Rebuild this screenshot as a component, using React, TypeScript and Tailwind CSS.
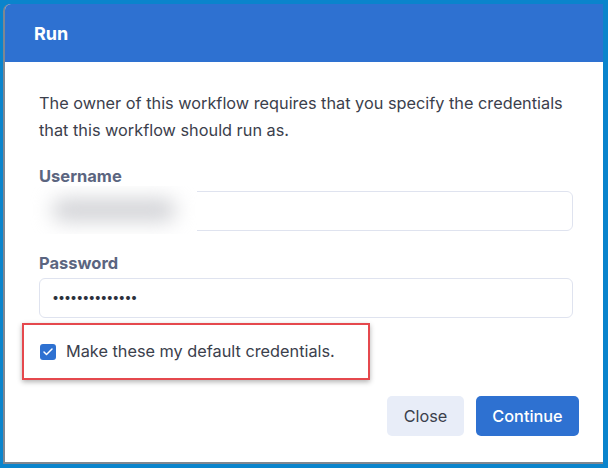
import { Check } from 'lucide-react';

const FONT = { fontFamily: 'Inter, "Liberation Sans", sans-serif' };

export default function App() {
  return (
    <div className="w-[608px] h-[468px] bg-[#0a84cc] pt-[4px] pl-[5px]" style={FONT}>
      <div className="w-[598px] h-[458px] bg-white rounded-tl-[6px] overflow-hidden shadow-[-1px_1px_0_1px_#7f8791]">
        <div className="h-[58px] bg-[#2e71d1] pl-[29px] flex items-center">
          <span className="text-[18px] font-bold text-white">Run</span>
        </div>

        <div className="pl-[34px] pr-[30px] pt-[28px]">
          <p className="text-[16.3px] leading-[27px] text-[#3b404c]">
            The owner of this workflow requires that you specify the credentials that this workflow should run as.
          </p>

          <label className="block mt-[22px] text-[16.5px] leading-[20px] font-bold text-[#5b6580]">Username</label>
          <div className="relative mt-[5px] h-[40px] rounded-[6px] border border-[#dfe3ef]">
            {/* redacted value */}
            <div className="absolute left-[-14px] top-[-6px] w-[171px] h-[48px] bg-white overflow-hidden">
              <div className="absolute left-[26px] top-[13px] w-[124px] h-[22px] rounded-full bg-[#d0d1d5] blur-[10px]" />
            </div>
          </div>

          <label className="block mt-[22px] text-[16.5px] leading-[20px] font-bold text-[#5b6580]">Password</label>
          <div className="mt-[5px] h-[40px] rounded-[6px] border border-[#dfe3ef] flex items-center pl-[12px]">
            <span className="text-[12.5px] tracking-[-1px] text-[#2c313c]">••••••••••••••</span>
          </div>

          <div className="ml-[-17px] mt-[5px] w-[348px] h-[57px] border-2 border-[#e5484d] shadow-[0_2px_5px_rgba(0,0,0,0.3)] flex items-center pl-[16px] gap-[10px]">
            <span className="w-[16px] h-[16px] rounded-[3px] bg-[#2e71d1] flex items-center justify-center">
              <Check size={12} strokeWidth={3} color="white" />
            </span>
            <span className="text-[16.3px] text-[#3b404c]">Make these my default credentials.</span>
          </div>

          <div className="mt-[16px] mr-[-6px] flex justify-end gap-[12px]">
            <button className="w-[77px] h-[40px] rounded-[5px] bg-[#e8edf8] text-[16.3px] text-[#3b404c]">Close</button>
            <button className="w-[103px] h-[40px] rounded-[5px] bg-[#2e71d1] text-[16.3px] font-medium text-white">Continue</button>
          </div>
        </div>
      </div>
    </div>
  );
}
